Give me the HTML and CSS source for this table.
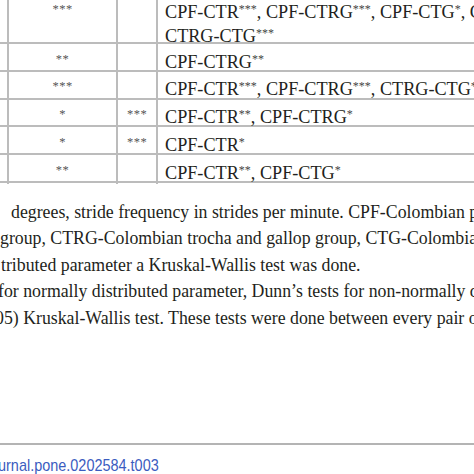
FILE: index.html
```html
<!DOCTYPE html>
<html>
<head>
<meta charset="utf-8">
<link rel="stylesheet" href="styles.css">
</head>
<body>
<div class="page">
  <div class="table">
    <div class="row first">
      <div class="cell edge"></div>
      <div class="cell mid"><span class="st">***</span></div>
      <div class="cell sm"></div>
      <div class="cell txt">CPF-CTR<span class="sup">***</span>, CPF-CTRG<span class="sup">***</span>, CPF-CTG<span class="sup">*</span>, CTR-CTRG<span class="sup">*</span>,<br>CTRG-CTG<span class="sup">***</span></div>
    </div>
    <div class="row">
      <div class="cell edge"></div>
      <div class="cell mid"><span class="st">**</span></div>
      <div class="cell sm"></div>
      <div class="cell txt">CPF-CTRG<span class="sup">**</span></div>
    </div>
    <div class="row">
      <div class="cell edge"></div>
      <div class="cell mid"><span class="st">***</span></div>
      <div class="cell sm"></div>
      <div class="cell txt">CPF-CTR<span class="sup">***</span>, CPF-CTRG<span class="sup">***</span>, CTRG-CTG<span class="sup">***</span></div>
    </div>
    <div class="row">
      <div class="cell edge"></div>
      <div class="cell mid"><span class="st">*</span></div>
      <div class="cell sm"><span class="st">***</span></div>
      <div class="cell txt">CPF-CTR<span class="sup">**</span>, CPF-CTRG<span class="sup">*</span></div>
    </div>
    <div class="row">
      <div class="cell edge"></div>
      <div class="cell mid"><span class="st">*</span></div>
      <div class="cell sm"><span class="st">***</span></div>
      <div class="cell txt">CPF-CTR<span class="sup">*</span></div>
    </div>
    <div class="row">
      <div class="cell edge"></div>
      <div class="cell mid"><span class="st">**</span></div>
      <div class="cell sm"></div>
      <div class="cell txt">CPF-CTR<span class="sup">**</span>, CPF-CTG<span class="sup">*</span></div>
    </div>
  </div>
  <div class="notes">
    <div class="line l1">degrees, stride frequency in strides per minute. CPF-Colombian paso fino group,</div>
    <div class="line l2">group, CTRG-Colombian trocha and gallop group, CTG-Colombian gallop group.</div>
    <div class="line l3">tributed parameter a Kruskal-Wallis test was done.</div>
    <div class="line l4">for normally distributed parameter, Dunn’s tests for non-normally distributed</div>
    <div class="line l5">05) Kruskal-Wallis test. These tests were done between every pair of groups.</div>
  </div>
  <div class="rule"></div>
  <div class="doi"><span class="link">urnal.pone.0202584.t003</span></div>
</div>
</body>
</html>
```
FILE: styles.css
```css
html, body {
  margin: 0;
  padding: 0;
  background: #ffffff;
}
body {
  width: 474px;
  height: 474px;
  overflow: hidden;
}
.page {
  width: 474px;
  height: 474px;
  overflow: hidden;
  font-family: "Liberation Serif", "Times New Roman", serif;
  color: #231f20;
}
.table {
  width: 760px;
  margin-top: -5.6px;
}
.row {
  display: grid;
  grid-template-columns: 9px 109px 40px 1fr;
  height: 27.8px;
  box-sizing: border-box;
  border-bottom: 2px solid #bcbcbc;
}
.row.first {
  height: 49.6px;
}
.cell {
  box-sizing: border-box;
  padding-top: 4.5px;
  font-size: 18.2px;
  line-height: 21px;
  white-space: nowrap;
}
.edge, .mid, .sm {
  border-right: 2px solid #bcbcbc;
}
.mid, .sm {
  text-align: center;
}
.txt {
  padding-left: 7px;
}
.st {
  font-size: 12.5px;
  color: #555;
  vertical-align: 5px;
  letter-spacing: 0.5px;
}
.sup {
  font-size: 12px;
  color: #444;
  vertical-align: 5px;
}
.notes {
  margin-top: 16px;
  width: 800px;
}
.line {
  font-size: 17.8px;
  line-height: 26.5px;
  white-space: nowrap;
}
.l1 { margin-left: 11px; }
.l2 { margin-left: 0; }
.l3 { margin-left: 1px; }
.l4 { margin-left: -2px; }
.l5 { margin-left: -5px; }
.rule {
  margin-top: 111.5px;
  height: 2px;
  background: #b4b4b4;
}
.doi {
  margin-top: 11px;
  line-height: 20px;
  white-space: nowrap;
}
.link {
  display: inline-block;
  margin-left: -2px;
  font-family: "Liberation Sans", Arial, sans-serif;
  font-size: 17px;
  color: #3b5cc0;
  transform: scaleX(0.85);
  transform-origin: left center;
}
```
